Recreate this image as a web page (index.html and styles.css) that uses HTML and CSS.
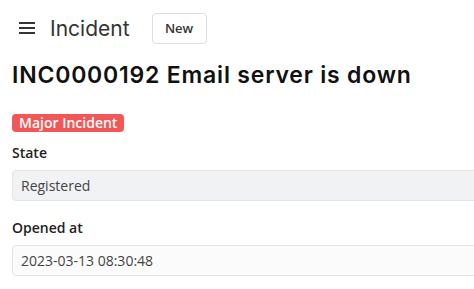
FILE: index.html
```html
<!DOCTYPE html>
<html lang="en">
<head>
    <meta charset="UTF-8">
    <title>Incident</title>
    <link rel="stylesheet" href="styles.css">
</head>
<body>
    <header class="topbar">
        <button class="menu-btn" aria-label="Menu">
            <svg width="16" height="14" viewBox="0 0 16 14">
                <rect x="0" y="1" width="16" height="2" fill="#333"/>
                <rect x="0" y="6" width="16" height="2" fill="#333"/>
                <rect x="0" y="11" width="16" height="2" fill="#333"/>
            </svg>
        </button>
        <span class="page-title">Incident</span>
        <button class="new-btn">New</button>
    </header>
    <main class="record">
        <h1 class="record-title">INC0000192 Email server is down</h1>
        <span class="badge">Major Incident</span>
        <div class="field">
            <label for="state">State</label>
            <input id="state" class="readonly" type="text" value="Registered" readonly>
        </div>
        <div class="field">
            <label for="opened">Opened at</label>
            <input id="opened" class="light" type="text" value="2023-03-13 08:30:48" readonly>
        </div>
    </main>
</body>
</html>
```

FILE: styles.css
```css
body {
    margin: 0;
    font-family: "Open Sans", Arial, sans-serif;
    color: #222;
    background: #fff;
    overflow: hidden;
}
.topbar {
    display: flex;
    align-items: center;
    height: 56px;
    padding-left: 19px;
}
.menu-btn {
    border: none;
    background: none;
    padding: 0;
    display: flex;
    margin-right: 15px;
}
.page-title {
    font-family: "Inter", sans-serif;
    font-size: 21px;
    color: #333;
    margin-right: 22px;
}
.new-btn {
    font-family: "Open Sans", sans-serif;
    font-size: 13px;
    font-weight: 600;
    color: #333;
    background: #fff;
    border: 1px solid #ddd;
    border-radius: 4px;
    width: 55px;
    height: 31px;
}
.record {
    padding-left: 12px;
}
.record-title {
    font-family: "Inter", sans-serif;
    font-weight: 600;
    font-size: 23px;
    letter-spacing: 0.8px;
    color: #111;
    margin: 5px 0 22px;
}
.badge {
    display: inline-block;
    background: #f25757;
    color: #fff;
    font-weight: 600;
    font-size: 14px;
    line-height: 18px;
    padding: 0 7px;
    border-radius: 4px;
}
.field {
    margin-top: 10px;
}
.field label {
    display: block;
    font-weight: 600;
    font-size: 14px;
    color: #222;
    margin-bottom: 8px;
}
.field input {
    display: block;
    width: calc(100% + 4px);
    box-sizing: border-box;
    height: 31px;
    border: 1px solid #e3e4e6;
    border-radius: 4px;
    padding: 0 8px;
    font-family: "Open Sans", sans-serif;
    font-size: 14px;
    color: #444;
    margin-bottom: 17px;
}
.field input.readonly {
    background: #f1f2f4;
}
.field input.light {
    background: #fbfbfc;
}
```
